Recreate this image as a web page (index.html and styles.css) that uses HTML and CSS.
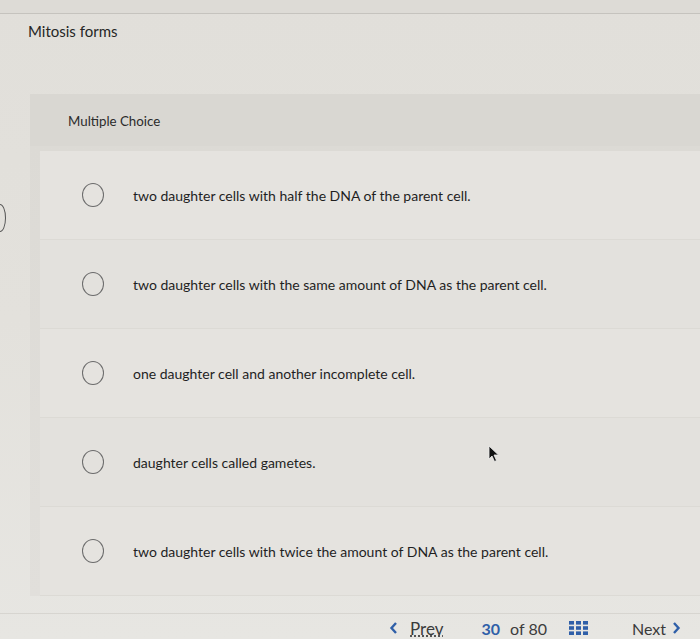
FILE: index.html
```html
<!DOCTYPE html>
<html>
<head>
<meta charset="utf-8">
<link rel="stylesheet" href="styles.css">
</head>
<body>
<div class="screen">
  <div class="topline"></div>
  <div class="title">Mitosis forms</div>
  <div class="panel">
    <div class="panel-head">Multiple Choice</div>
    <div class="options">
      <div class="opt"><span class="radio"></span><span class="label">two daughter cells with half the DNA of the parent cell.</span></div>
      <div class="opt"><span class="radio"></span><span class="label">two daughter cells with the same amount of DNA as the parent cell.</span></div>
      <div class="opt"><span class="radio"></span><span class="label">one daughter cell and another incomplete cell.</span></div>
      <div class="opt"><span class="radio"></span><span class="label">daughter cells called gametes.</span></div>
      <div class="opt"><span class="radio"></span><span class="label">two daughter cells with twice the amount of DNA as the parent cell.</span></div>
    </div>
  </div>
  <div class="nav">
    <span class="prev"><svg class="chev" width="9" height="14" viewBox="0 0 9 14"><path d="M7 2 L2.5 7 L7 12" fill="none" stroke="#2f5fa8" stroke-width="2.4"/></svg><span class="prev-text">Prev</span></span>
    <span class="count"><b>30</b> of 80</span>
    <svg class="grid" width="19" height="14" viewBox="0 0 19 14"><g fill="#2f5fa8"><rect x="0" y="0" width="5" height="3.6"/><rect x="7" y="0" width="5" height="3.6"/><rect x="14" y="0" width="5" height="3.6"/><rect x="0" y="5.2" width="5" height="3.6"/><rect x="7" y="5.2" width="5" height="3.6"/><rect x="14" y="5.2" width="5" height="3.6"/><rect x="0" y="10.4" width="5" height="3.6"/><rect x="7" y="10.4" width="5" height="3.6"/><rect x="14" y="10.4" width="5" height="3.6"/></g></svg>
    <span class="next">Next <svg width="9" height="14" viewBox="0 0 9 14"><path d="M2 2 L6.5 7 L2 12" fill="none" stroke="#2f5fa8" stroke-width="2.4"/></svg></span>
  </div>
  <span class="edge"></span>
  <svg class="cursor" width="12" height="18" viewBox="0 0 12 18"><path d="M1 1 L1 14 L4 11 L6.5 16.5 L8.5 15.5 L6 10 L10.5 10 Z" fill="#111" stroke="#eee" stroke-width="0.8"/></svg>
</div>
</body>
</html>
```
FILE: styles.css
```css
html, body {
  margin: 0;
  padding: 0;
}
body {
  width: 700px;
  height: 639px;
  overflow: hidden;
  background: #e2e0db;
  font-family: Lato, "Open Sans", Arial, sans-serif;
  color: #2a2a2a;
}
.screen {
  position: relative;
  width: 700px;
  height: 639px;
  background: linear-gradient(180deg, #e1dfda 0%, #e3e1dc 50%, #e7e6e2 100%);
}
.topline {
  height: 13px;
  border-bottom: 1px solid #c5c3be;
  background: #dddbd6;
}
.title {
  padding-left: 28px;
  margin-top: 8px;
  font-size: 15px;
  line-height: 18px;
  color: #262626;
}
.panel {
  margin-top: 54px;
  margin-left: 30px;
  background: #d9d7d2;
}
.panel-head {
  height: 52px;
  padding-left: 38px;
  line-height: 54px;
  font-size: 13.3px;
  color: #2b2b2b;
}
.options {
  display: flex;
  flex-direction: column;
  padding-left: 10px;
  background: linear-gradient(180deg, #dcdad5, #e1dfdb);
  padding-top: 5px;
}
.opt {
  height: 89px;
  display: flex;
  align-items: center;
  background: #e3e1dd;
  border-bottom: 1px solid #dcdad5;
  box-sizing: border-box;
}
.opt:nth-child(odd) {
  background: #e5e3df;
}
.radio {
  width: 20px;
  height: 22px;
  border: 1.6px solid #6b6b6b;
  border-radius: 50%;
  margin-left: 42px;
  flex: none;
}
.label {
  margin-left: 29px;
  font-size: 14px;
  color: #1f1f1f;
}
.nav {
  display: flex;
  align-items: center;
  height: 28px;
  margin-top: 17px;
  padding-left: 389px;
  font-size: 16px;
  color: #333;
  border-top: 1px solid #d7d5d0;
}
.prev {
  display: flex;
  align-items: center;
}
.chev {
  margin-right: 12px;
}
.prev-text {
  text-decoration: underline dotted;
  color: #3a3a3a;
  font-size: 17px;
}
.count {
  margin-left: 38px;
  color: #3c3c3c;
}
.count b {
  color: #2f5fa8;
  font-weight: 700;
  margin-right: 6px;
}
.grid {
  margin-left: 22px;
}
.next {
  margin-left: 44px;
  display: flex;
  align-items: center;
  gap: 6px;
  color: #3a3a3a;
}
.edge {
  position: absolute;
  left: -6px;
  top: 204px;
  width: 10px;
  height: 26px;
  border: 1.5px solid #555;
  border-radius: 50%;
}
.cursor {
  position: absolute;
  left: 488px;
  top: 445px;
}
```
